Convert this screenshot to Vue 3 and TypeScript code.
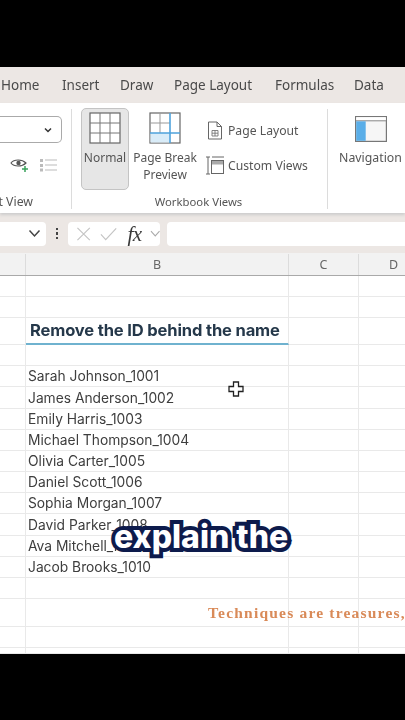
<script setup lang="ts">
const tabs = [
  { label: 'Home', width: 61 },
  { label: 'Insert', width: 58 },
  { label: 'Draw', width: 54 },
  { label: 'Page Layout', width: 101 },
  { label: 'Formulas', width: 79 },
  { label: 'Data', width: 40 },
]
const rows = [
  { h: 21, b: '' }, { h: 21, b: '' },
  { h: 27, b: 'Remove the ID behind the name', title: true },
  { h: 21, b: '' },
  { h: 21, b: 'Sarah Johnson_1001' },
  { h: 22, b: 'James Anderson_1002' },
  { h: 21, b: 'Emily Harris_1003' },
  { h: 21, b: 'Michael Thompson_1004' },
  { h: 21, b: 'Olivia Carter_1005' },
  { h: 21, b: 'Daniel Scott_1006' },
  { h: 21, b: 'Sophia Morgan_1007' },
  { h: 22, b: 'David Parker_1008' },
  { h: 21, b: 'Ava Mitchell_1009' },
  { h: 21, b: 'Jacob Brooks_1010' },
  { h: 21, b: '' },
  { h: 28, b: '', motto: 'Techniques are treasures,' },
  { h: 21, b: '' },
  { h: 6, b: '' },
]
</script>

<template>
  <div class="screen">
    <div class="bar"></div>
    <div class="excel">
      <nav class="tabs">
        <span v-for="t in tabs" :key="t.label" class="tab" :style="{ width: t.width + 'px' }">{{ t.label }}</span>
      </nav>

      <section class="ribbon">
        <div class="sheet-group">
          <div class="sheet-select">
            <svg width="10" height="10" viewBox="0 0 10 10"><path d="M2 3.500 5 6.500 8 3.500" fill="none" stroke="#333" stroke-width="1.500" /></svg>
          </div>
          <div class="sheet-icons">
            <svg width="20" height="18" viewBox="0 0 20 18">
              <path d="M1 7C4 3 12 3 16 7C12 11 4 11 1 7Z" fill="none" stroke="#555" stroke-width="1.100" />
              <circle cx="8.500" cy="7" r="2.200" fill="#555" />
              <path d="M15 10v6M12 13h6" stroke="#3aa35c" stroke-width="1.500" />
            </svg>
            <svg width="18" height="14" viewBox="0 0 18 14">
              <path d="M1 1h3v3H1zM1 6h3v3H1zM1 10.500h3v3H1z" fill="#bbb" />
              <path d="M6 2h12M6 7h12M6 12h12" stroke="#bbb" stroke-width="1.200" />
            </svg>
          </div>
          <div class="sheet-label">Sheet View</div>
        </div>
        <div class="sep"></div>

        <div class="views-group">
          <div class="views">
            <div class="view-btn active">
              <svg width="32" height="32" viewBox="0 0 32 32">
                <rect x="1" y="1" width="30" height="30" fill="#fff" stroke="#666" stroke-width="1.200" />
                <path d="M11 1v30M21 1v30M1 11h30M1 21h30" stroke="#777" stroke-width="1" />
              </svg>
              <span>Normal</span>
            </div>
            <div class="view-btn break">
              <svg width="32" height="32" viewBox="0 0 32 32">
                <rect x="1" y="1" width="30" height="30" fill="#fff" stroke="#666" stroke-width="1.200" />
                <rect x="1.500" y="21" width="19" height="9.500" fill="#d9ecf8" />
                <path d="M11 1v20M1 11h20" stroke="#999" stroke-width="1" />
                <path d="M21 1v30M1 21h30" stroke="#4fa3dc" stroke-width="1.600" />
              </svg>
              <span>Page Break<br />Preview</span>
            </div>
            <div class="view-list">
              <div class="view-item">
                <svg width="16" height="19" viewBox="0 0 16 19">
                  <path d="M1.500 1h8.500l4.500 4.500v12.500h-13z" fill="#fff" stroke="#666" />
                  <path d="M10 1v4.500h4.500" fill="none" stroke="#666" />
                  <path d="M5 9.500h6v5.500h-6zM8 9.500v5.500M5 12.200h6" fill="none" stroke="#777" stroke-width=".9" />
                </svg>
                <span>Page Layout</span>
              </div>
              <div class="view-item">
                <svg width="18" height="19" viewBox="0 0 18 19">
                  <path d="M0 1h4M0 18h4M2 1v17" fill="none" stroke="#666" />
                  <path d="M6 1h12" stroke="#666" />
                  <rect x="5.500" y="4.500" width="12" height="13" fill="#fff" stroke="#666" />
                  <rect x="6" y="5" width="11" height="3.500" fill="#aaa" />
                </svg>
                <span>Custom Views</span>
              </div>
            </div>
          </div>
          <div class="group-label">Workbook Views</div>
        </div>
        <div class="sep"></div>

        <div class="nav-btn">
          <svg width="32" height="26" viewBox="0 0 32 26">
            <rect x=".6" y=".6" width="30.800" height="24.800" fill="#f6f6f6" stroke="#777" stroke-width="1.200" />
            <rect x="1.200" y="1.200" width="29.600" height="3.500" fill="#fff" />
            <path d="M1 4.800h30" stroke="#888" />
            <rect x="1.200" y="5.300" width="9.500" height="19.500" fill="#5aaee8" />
          </svg>
          <span>Navigation</span>
        </div>
      </section>

      <div class="formula">
        <div class="name-box">
          <svg width="13" height="9" viewBox="0 0 13 9"><path d="M1.500 1.500 6.500 7 11.500 1.500" fill="none" stroke="#444" stroke-width="1.500" /></svg>
        </div>
        <div class="dots"><i></i><i></i><i></i></div>
        <div class="fx-box">
          <svg width="16" height="16" viewBox="0 0 16 16"><path d="M1.500 1.500 14.500 14.500M14.500 1.500 1.500 14.500" stroke="#c4c4c4" stroke-width="1.200" /></svg>
          <svg width="18" height="14" viewBox="0 0 18 14"><path d="M1 7.500 6 13 17 1" fill="none" stroke="#c4c4c4" stroke-width="1.200" /></svg>
          <span class="fx">fx</span>
          <svg width="11" height="7" viewBox="0 0 11 7"><path d="M1 1 5.500 6 10 1" fill="none" stroke="#aaa" stroke-width="1.100" /></svg>
        </div>
        <div class="input"></div>
      </div>

      <header class="col-head">
        <span class="c-a"></span>
        <span class="c-b">B</span>
        <span class="c-c">C</span>
        <span class="c-d">D</span>
      </header>

      <div class="grid">
        <div v-for="(r, i) in rows" :key="i" class="row" :style="{ height: r.h + 'px' }">
          <div class="c-a cell"></div>
          <div class="c-b cell" :class="{ title: r.title }">{{ r.b }}</div>
          <div class="c-c cell"></div>
          <div class="c-d cell"></div>
          <div v-if="r.motto" class="motto">{{ r.motto }}</div>
        </div>
      </div>
    </div>
    <div class="bar bottom"></div>

    <svg class="cursor" width="16" height="16" viewBox="0 0 16 16">
      <path d="M5.500 1h5v4.500H15v5h-4.500V15h-5v-4.500H1v-5h4.500z" fill="#fff" stroke="#222" stroke-width="1.300" />
    </svg>
    <div class="subtitle">explain the</div>
  </div>
</template>

<style scoped>
.screen {
  position: relative;
  width: 405px;
  height: 720px;
  overflow: hidden;
  display: flex;
  flex-direction: column;
  background: #000;
  font-family: "Noto Sans", "Liberation Sans", sans-serif;
  color: #444;
}
.bar { height: 67px; background: #000; flex: none; }
.bar.bottom { flex: 1; }
.excel { flex: none; overflow: hidden; background: #fff; filter: blur(.35px); }

.tabs { height: 36px; display: flex; align-items: center; background: #ece7e4; padding-left: 1px; }
.tab { font-size: 13.500px; color: #4a4a4a; flex: none; white-space: nowrap; }

.ribbon { height: 110px; display: flex; background: #fff; box-shadow: 0 2px 3px #ccc; position: relative; }
.sep { width: 1px; margin: 6px 0 4px; background: #dcdcdc; flex: none; }

.sheet-group { width: 71px; flex: none; position: relative; }
.sheet-select {
  box-sizing: border-box; width: 63px; height: 27px; margin-top: 13px; margin-left: -1px;
  border: 1px solid #aaa; border-left: 0; border-radius: 0 5px 5px 0;
  display: flex; align-items: center; justify-content: flex-end; padding-right: 8px;
}
.sheet-icons { display: flex; align-items: center; gap: 9px; padding-left: 10px; margin-top: 13px; }
.sheet-label { position: absolute; right: 38px; top: 90px; font-size: 12.300px; white-space: nowrap; color: #555; }

.views-group { width: 255px; flex: none; display: flex; flex-direction: column; }
.views { display: flex; padding: 5px 0 0 9px; height: 87px; box-sizing: border-box; }
.view-btn { display: flex; flex-direction: column; align-items: center; font-size: 12px; line-height: 17px; text-align: center; color: #555; }
.view-btn svg { margin-bottom: 5px; }
.view-btn.active {
  box-sizing: border-box; width: 48px; height: 82px; background: #e6e6e6;
  border: 1px solid #c4c4c4; border-radius: 5px; margin-right: 4px; padding-top: 3px;
}
.view-btn.break { width: 64px; padding-top: 4px; white-space: nowrap; }
.view-list { display: flex; flex-direction: column; gap: 16px; padding: 13px 0 0 10px; }
.view-item { display: flex; align-items: center; gap: 5px; font-size: 12.200px; white-space: nowrap; height: 19px; color: #555; }
.view-item:last-child { gap: 4px; margin-left: -1px; }
.group-label { text-align: center; font-size: 11.300px; color: #555; margin-top: 4px; margin-left: -2px; }

.nav-btn { flex: none; width: 77px; display: flex; flex-direction: column; align-items: center; padding-top: 13px; padding-left: 8px; font-size: 12.300px; color: #555; box-sizing: border-box; white-space: nowrap; }
.nav-btn svg { margin-bottom: 7px; }

.formula { height: 40px; background: #ece7e4; display: flex; align-items: center; padding-top: 1px; box-sizing: border-box; }
.name-box { width: 46px; height: 24px; background: #fff; border-radius: 0 4px 4px 0; display: flex; align-items: center; justify-content: flex-end; padding-right: 5px; box-sizing: border-box; }
.dots { width: 22px; display: flex; flex-direction: column; align-items: center; gap: 2px; }
.dots i { width: 2.500px; height: 2.500px; background: #444; }
.fx-box { width: 92px; height: 24px; background: #fff; border-radius: 4px; display: flex; align-items: center; padding-left: 8px; box-sizing: border-box; flex: none; }
.fx-box svg:nth-child(2) { margin-left: 9px; }
.fx-box svg:last-child { margin-left: 5px; }
.fx { font-family: "Liberation Serif", serif; font-style: italic; font-size: 21px; color: #3a3a3a; margin-left: 10px; width: 18px; letter-spacing: -.5px; line-height: 24px; }
.input { flex: 1; height: 24px; background: #fff; border-radius: 4px 0 0 4px; margin-left: 7px; }

.col-head { display: flex; height: 23px; background: #f2f2f2; border-bottom: 1px solid #a9a9a9; font-size: 12.500px; color: #666; overflow: hidden; box-sizing: border-box; padding-top: 1px; }
.col-head + .grid { padding-top: 0; }
.col-head span { display: flex; align-items: center; justify-content: center; box-sizing: border-box; border-right: 1px solid #dcdcdc; }
.c-a { width: 26px; flex: none; box-sizing: border-box; }
.c-b { width: 263px; flex: none; box-sizing: border-box; }
.c-c { width: 70px; flex: none; box-sizing: border-box; }
.c-d { width: 70px; flex: none; box-sizing: border-box; }

.row { display: flex; position: relative; overflow: hidden; }
.cell {
  box-sizing: border-box; border-right: 1px solid #e9e9e9; border-bottom: 1px solid #e9e9e9;
  font-family: "Inter", "Liberation Sans", sans-serif;
  font-size: 13.800px; color: #3e3e3e; white-space: nowrap; padding-left: 2px;
  display: flex; align-items: flex-end; line-height: 20px;
}
.cell.title {
  font-weight: 700; font-size: 16.550px; color: #25384a; letter-spacing: -.15px;
  border-bottom: 2px solid #6fb2cf; padding-left: 4px; padding-bottom: 3px;
}
.motto {
  position: absolute; left: 208px; top: 5px; white-space: nowrap;
  font-family: "Liberation Serif", serif; font-weight: 700; font-size: 15.500px;
  letter-spacing: 1.200px; color: #d98a58;
}

.cursor { position: absolute; left: 228px; top: 381px; }
.subtitle {
  position: absolute; left: 114px; top: 517px; white-space: nowrap;
  font-family: "Inter", "Liberation Sans", sans-serif; font-weight: 800; font-size: 32px; line-height: 40px;
  color: #fff; -webkit-text-stroke: 8px #0d1b4c; paint-order: stroke fill;
}
</style>
